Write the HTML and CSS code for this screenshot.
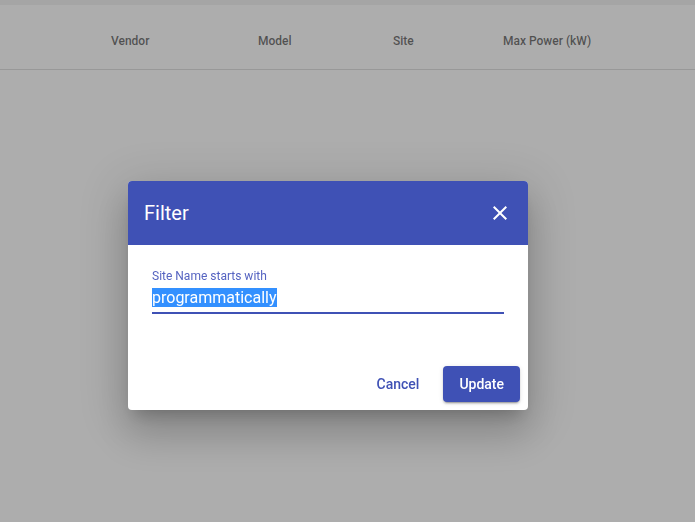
FILE: index.html
```html
<!DOCTYPE html>
<html>
<head>
<meta charset="utf-8">
<link rel="stylesheet" href="styles.css">
</head>
<body>
<div class="page">
  <div class="topbar"></div>
  <div class="table-head">
    <div class="col col-vendor">Vendor</div>
    <div class="col col-model">Model</div>
    <div class="col col-site">Site</div>
    <div class="col col-power">Max Power (kW)</div>
  </div>
</div>
<div class="backdrop"></div>
<div class="dialog">
  <div class="dialog-header">
    <div class="dialog-title">Filter</div>
    <svg class="close" viewBox="0 0 24 24" width="24" height="24"><path fill="#fff" d="M19 6.41L17.590 5 12 10.59 6.41 5 5 6.41 10.59 12 5 17.59 6.41 19 12 13.41 17.59 19 19 17.59 13.41 12z"/></svg>
  </div>
  <div class="dialog-body">
    <div class="field">
      <div class="field-label">Site Name starts with</div>
      <div class="field-input"><span class="selected">programmatically</span></div>
    </div>
  </div>
  <div class="dialog-actions">
    <button class="btn btn-text">Cancel</button>
    <button class="btn btn-raised">Update</button>
  </div>
</div>
</body>
</html>
```

FILE: styles.css
```css
html, body {
  margin: 0;
  padding: 0;
  width: 695px;
  height: 522px;
  overflow: hidden;
  background: #fff;
  font-family: Roboto, "Liberation Sans", sans-serif;
}
.page {
  display: flex;
  flex-direction: column;
}
.topbar {
  height: 5px;
  background: #f3f3f3;
}
.table-head {
  margin-top: 7px;
  height: 57px;
  border-bottom: 1px solid rgba(0,0,0,0.12);
  display: flex;
  align-items: center;
  padding-left: 111px;
  font-size: 12px;
  font-weight: 500;
  color: rgba(0,0,0,0.54);
}
.col-vendor { width: 147px; }
.col-model { width: 135px; }
.col-site { width: 110px; }
.backdrop {
  position: fixed;
  inset: 0;
  background: rgba(0,0,0,0.32);
}
.dialog {
  position: absolute;
  left: 128px;
  top: 181px;
  width: 400px;
  background: #fff;
  border-radius: 4px;
  overflow: hidden;
  box-shadow: 0 11px 15px -7px rgba(0,0,0,.2), 0 24px 38px 3px rgba(0,0,0,.14), 0 9px 46px 8px rgba(0,0,0,.12);
}
.dialog-header {
  height: 64px;
  background: #3f51b5;
  color: #fff;
  display: flex;
  align-items: center;
  justify-content: space-between;
  padding: 0 16px;
}
.dialog-title {
  font-size: 20px;
  font-weight: 400;
  padding-bottom: 1px;
}
.close {
  display: block;
}
.dialog-body {
  padding: 24px 24px 44px;
}
.field-label {
  font-size: 12px;
  line-height: 14px;
  color: #5563c1;
}
.field-input {
  margin-top: 5px;
  font-size: 16px;
  line-height: 19px;
  height: 19px;
  padding-bottom: 5px;
  border-bottom: 2px solid #3f51b5;
  color: #222;
}
.selected {
  background: #3390ff;
  color: #fff;
}
.dialog-actions {
  display: flex;
  justify-content: flex-end;
  gap: 8px;
  padding: 8px;
}
.btn {
  font-family: Roboto, "Liberation Sans", sans-serif;
  font-size: 14px;
  font-weight: 500;
  height: 36px;
  padding: 0 16px;
  min-width: 64px;
  border: none;
  border-radius: 4px;
  background: transparent;
  cursor: pointer;
}
.btn-text {
  color: #3f51b5;
}
.btn-raised {
  background: #3f51b5;
  color: #fff;
  box-shadow: 0 3px 1px -2px rgba(0,0,0,.2), 0 2px 2px 0 rgba(0,0,0,.14), 0 1px 5px 0 rgba(0,0,0,.12);
}
```
